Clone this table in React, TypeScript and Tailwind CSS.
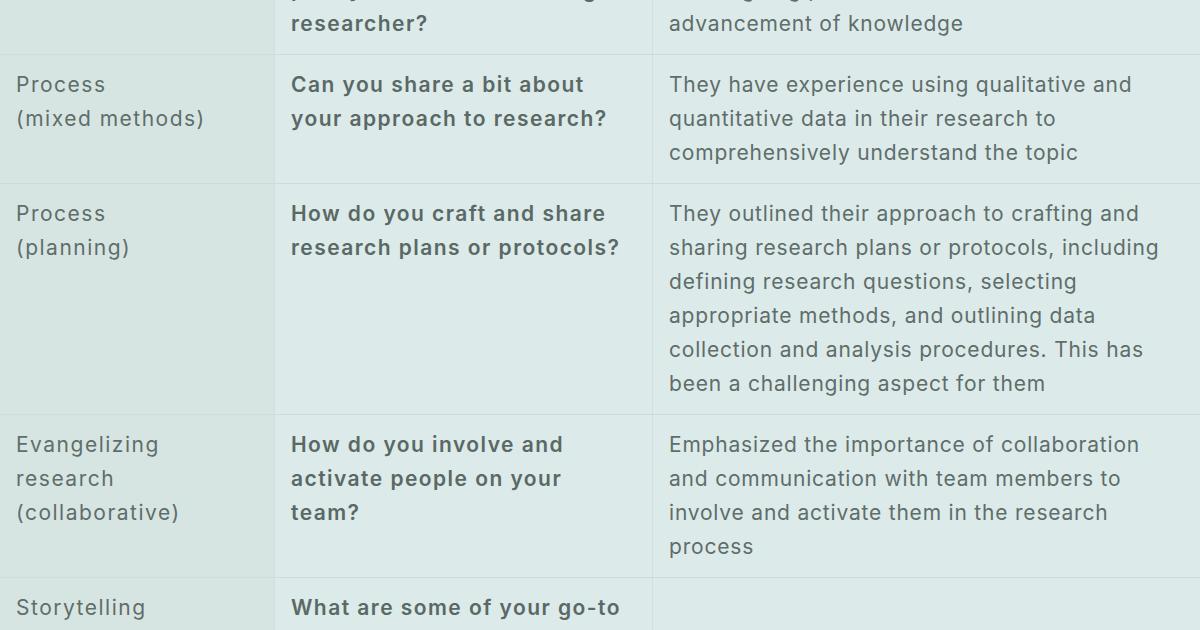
import React from "react";

type Row = { a: string[]; q: string[]; r: string[] };

const rows: Row[] = [
  {
    a: ["", ""],
    q: ["path you took to becoming a", "researcher?"],
    r: ["and ongoing pursuit of the", "advancement of knowledge"],
  },
  {
    a: ["Process", "(mixed methods)"],
    q: ["Can you share a bit about", "your approach to research?"],
    r: [
      "They have experience using qualitative and",
      "quantitative data in their research to",
      "comprehensively understand the topic",
    ],
  },
  {
    a: ["Process", "(planning)"],
    q: ["How do you craft and share", "research plans or protocols?"],
    r: [
      "They outlined their approach to crafting and",
      "sharing research plans or protocols, including",
      "defining research questions, selecting",
      "appropriate methods, and outlining data",
      "collection and analysis procedures. This has",
      "been a challenging aspect for them",
    ],
  },
  {
    a: ["Evangelizing", "research", "(collaborative)"],
    q: ["How do you involve and", "activate people on your", "team?"],
    r: [
      "Emphasized the importance of collaboration",
      "and communication with team members to",
      "involve and activate them in the research",
      "process",
    ],
  },
  {
    a: ["Storytelling"],
    q: ["What are some of your go-to", "methods for telling stories?"],
    r: [""],
  },
];

function Lines({ lines }: { lines: string[] }) {
  return (
    <>
      {lines.map((l, i) => (
        <div key={i} className="whitespace-nowrap h-[34px]">
          {l || "\u00a0"}
        </div>
      ))}
    </>
  );
}

export default function App() {
  return (
    <div
      className="w-[1200px] h-[630px] overflow-hidden bg-[#dcebe9] text-[21px] leading-[34px] text-[#5f6d6b]"
      style={{ fontFamily: "Inter, 'Noto Sans', sans-serif" }}
    >
      <div className="-mt-[40px] flex flex-col">
        {rows.map((row, i) => (
          <div key={i} className="flex border-b border-[#cddcd9]">
            <div className="w-[275px] shrink-0 bg-[#d7e5e2] border-r border-[#d2e0dd] pl-4 pt-[13px] pb-[13px] tracking-[1.5px]">
              <Lines lines={row.a} />
            </div>
            <div className="w-[378px] shrink-0 border-r border-[#d2e0dd] pl-4 pt-[13px] pb-[13px] font-semibold text-[#5a6866] tracking-[1.45px]">
              <Lines lines={row.q} />
            </div>
            <div className="flex-1 pl-4 pt-[13px] pb-[13px] tracking-[0.8px]">
              <Lines lines={row.r} />
            </div>
          </div>
        ))}
      </div>
    </div>
  );
}
